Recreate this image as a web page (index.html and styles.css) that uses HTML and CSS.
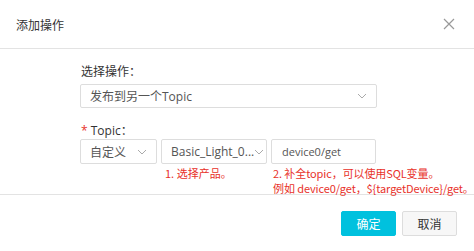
FILE: index.html
```html
<!DOCTYPE html>
<html lang="zh-CN">
<head>
<meta charset="UTF-8">
<meta name="viewport" content="width=device-width, initial-scale=1.0">
<title>添加操作</title>
<link rel="stylesheet" href="styles.css">
</head>
<body>

<div class="dialog">
  <div class="dialog-header">
    <div class="dialog-title">添加操作</div>
    <svg class="close" width="12" height="12" viewBox="0 0 12 12">
      <path d="M1 1L11 11M11 1L1 11" stroke="#999" stroke-width="1.2" fill="none"/>
    </svg>
  </div>

  <div class="dialog-body">
    <div class="label">选择操作：</div>
    <div class="select">
      <span>发布到另一个Topic</span>
      <svg class="arrow" width="10" height="6" viewBox="0 0 10 6"><polyline points="1,1 5,5 9,1" stroke="#aaa" fill="none"/></svg>
    </div>

    <div class="label label-topic"><span class="star">*</span> Topic：</div>
    <div class="topic-grid">
      <div class="select">
        <span>自定义</span>
        <svg class="arrow" width="10" height="6" viewBox="0 0 10 6"><polyline points="1,1 5,5 9,1" stroke="#aaa" fill="none"/></svg>
      </div>
      <div class="select">
        <span>Basic_Light_0...</span>
        <svg class="arrow" width="10" height="6" viewBox="0 0 10 6"><polyline points="1,1 5,5 9,1" stroke="#aaa" fill="none"/></svg>
      </div>
      <div class="input">device0/get</div>
      <div class="hint hint-1">1. 选择产品。</div>
      <div class="hint hint-2">2. 补全topic，可以使用SQL变量。<br>例如 device0/get，${targetDevice}/get。</div>
    </div>
  </div>

  <div class="dialog-footer">
    <button class="btn btn-primary">确定</button>
    <button class="btn">取消</button>
  </div>
</div>

</body>
</html>
```

FILE: styles.css
```css
body {
  margin: 0;
  background-color: #fff;
  font-family: "Open Sans", "Noto Sans CJK SC", sans-serif;
  font-size: 12px;
  color: #333;
}

.dialog {
  width: 474px;
  height: 251px;
  overflow: hidden;
}

.dialog-header {
  height: 48px;
  display: flex;
  justify-content: space-between;
  align-items: center;
  padding: 0 19px 0 16px;
  border-bottom: 1px solid #e3e3e3;
}

.dialog-title {
  font-size: 12px;
  color: #333;
  margin-top: 2px;
}

.close {
  margin-top: -1px;
}

.dialog-body {
  padding: 15px 97px 0 80px;
}

.label {
  line-height: 16px;
  color: #333;
  margin-left: 1px;
}

.label-topic {
  margin-top: 15px;
}

.star {
  color: #e8312a;
}

.select,
.input {
  box-sizing: border-box;
  height: 24px;
  border: 1px solid #ddd;
  border-radius: 2px;
  display: flex;
  justify-content: space-between;
  align-items: center;
  padding: 0 9px 0 9px;
  color: #555;
  margin-top: 4px;
}

.input {
  font-size: 11px;
  padding-left: 10px;
}

.arrow {
  flex-shrink: 0;
}

.topic-grid {
  display: grid;
  grid-template-columns: 77px 106px 105px;
  column-gap: 4px;
}

.topic-grid .select,
.topic-grid .input {
  height: 25px;
  margin-top: 0;
}

.hint {
  color: #e8312a;
  font-family: "Noto Sans CJK SC", sans-serif;
  font-size: 11px;
  line-height: 15px;
  margin-top: 2px;
}

.hint-1 {
  grid-column: 2;
  padding-left: 4px;
}

.hint-2 {
  grid-column: 3;
  padding-left: 2px;
  white-space: nowrap;
  letter-spacing: -0.1px;
}

.dialog-footer {
  margin-top: -2px;
  border-top: 1px solid #e3e3e3;
  display: flex;
  justify-content: flex-end;
  gap: 6px;
  padding: 16px 17px 0 0;
}

.btn {
  width: 55px;
  height: 25px;
  border: 1px solid #ddd;
  border-radius: 2px;
  background-color: #f7f7f7;
  color: #333;
  font-family: "Noto Sans CJK SC", sans-serif;
  font-size: 12px;
  padding: 0;
}

.btn-primary {
  background-color: #00c1de;
  border-color: #00c1de;
  color: #fff;
}
```
